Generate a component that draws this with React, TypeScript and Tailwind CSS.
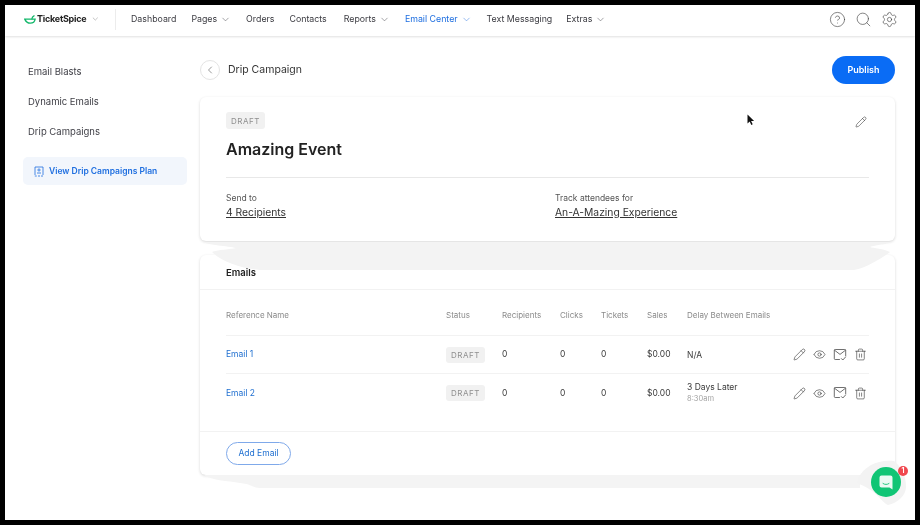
import { ChevronDown, ChevronLeft, CircleHelp, Search, Settings, Pencil, Eye, Trash2 } from "lucide-react";

function NavItem({ label, chevron, active, className }: { label: string; chevron?: boolean; active?: boolean; className?: string }) {
  return (
    <div className={`${active ? "text-[#1f6fe0]" : "text-[#3a3a40]"} flex items-center gap-[3px] ${className ?? ""}`}>
      <span>{label}</span>
      {chevron && <ChevronDown size={11} strokeWidth={1} />}
    </div>
  );
}

function MailCheck() {
  return (
    <svg width="14" height="14" viewBox="0 0 14 14" fill="none" stroke="#4a4a4a" strokeWidth="0.8" strokeLinecap="round" strokeLinejoin="round">
      <path d="M6.5 11.5H2.2a.9.9 0 0 1-.9-.9V2.4a.9.9 0 0 1 .9-.9h9.6a.9.9 0 0 1 .9.9V8" />
      <path d="M1.5 2.2 7 6.4l5.5-4.2" />
      <path d="M8.4 10.6l1.4 1.4 2.6-2.8" />
    </svg>
  );
}

function Actions() {
  return (
    <div className="flex items-center gap-[7px] text-[#333]">
      <Pencil size={13} strokeWidth={1.1} />
      <Eye size={13} strokeWidth={1.1} />
      <MailCheck />
      <Trash2 size={13} strokeWidth={1.1} />
    </div>
  );
}

const gridCols = "grid grid-cols-[220px_56px_58px_41px_46px_40px_106px_1fr] items-center";

function Row({ name, delay, sub }: { name: string; delay: string; sub?: string }) {
  return (
    <div className={`${gridCols} h-[38px] border-b border-[#f2f2f2] text-[8.5px] text-[#3a3a3a] last:border-b-0`}>
      <span className="text-[#1f6fd0]">{name}</span>
      <span className="justify-self-start rounded-[3px] bg-[#f1f1f1] px-[5px] py-[2px] text-[8px] tracking-[0.5px] text-[#8f8f8f]">DRAFT</span>
      <span>0</span>
      <span>0</span>
      <span>0</span>
      <span>$0.00</span>
      <div className="flex flex-col leading-[12px]">
        <span>{delay}</span>
        {sub && <span className="text-[7.5px] text-[#a3a3a3]">{sub}</span>}
      </div>
      <Actions />
    </div>
  );
}

export default function App() {
  return (
    <div className="h-[525px] w-[920px] overflow-hidden bg-black p-[5px] font-['Inter',sans-serif]">
      <div className="relative flex h-[515px] w-[910px] flex-col overflow-hidden bg-white blur-[0.3px]">
        <header className="relative z-10 flex h-[31px] shrink-0 items-center bg-white pb-[3px] pl-[19px] pr-[17px] text-[8.8px] shadow-[0_1px_2px_rgba(0,0,0,0.12)]">
          <div className="flex w-[76px] items-center gap-[1px]">
            <svg width="14" height="11" viewBox="0 0 13 10" fill="none" stroke="#12b76a" strokeWidth="1.4" strokeLinecap="round">
              <path d="M0.8 4.6h11.2c-.4 2.8-2.6 4.4-5.2 4.4C4 9 2 7.4 0.8 4.6Z" />
              <path d="M8.6 4.2c0-1.6.8-2.6 2.2-3.2" />
            </svg>
            <span className="text-[9px] font-bold tracking-[-0.25px] text-[#222]">TicketSpice</span>
            <ChevronDown size={10} strokeWidth={1} className="ml-[4px] text-[#555]" />
          </div>
          <div className="ml-[15px] mr-[15px] h-[21px] w-px bg-[#ececec]" />
          <nav className="flex items-center gap-[15px]">
            <NavItem label="Dashboard" />
            <NavItem label="Pages" chevron />
            <NavItem label="Orders" />
            <NavItem label="Contacts" className="mr-[2px]" />
            <NavItem label="Reports" chevron />
            <NavItem label="Email Center" chevron active />
            <NavItem label="Text Messaging" className="-mr-[1px]" />
            <NavItem label="Extras" chevron />
          </nav>
          <div className="ml-auto flex items-center gap-[9px] text-[#404040]">
            <CircleHelp size={17} strokeWidth={0.9} />
            <Search size={17} strokeWidth={0.9} />
            <Settings size={17} strokeWidth={0.9} />
          </div>
        </header>

        <div className="flex min-h-0 flex-1">
          <aside className="w-[195px] shrink-0 pl-[18px] pr-[12px] pt-[21px] text-[9.5px] text-[#3f3f46]">
            <div className="flex h-[30px] items-center pl-[5px]">Email Blasts</div>
            <div className="flex h-[30px] items-center pl-[5px]">Dynamic Emails</div>
            <div className="flex h-[30px] items-center pl-[5px]">Drip Campaigns</div>
            <div className="mt-[10px] flex h-[28px] w-[164px] items-center gap-[5px] rounded-[5px] bg-[#f2f6fc] pl-[11px] text-[8.5px] font-semibold text-[#1f6fe0]">
              <svg width="10" height="11" viewBox="0 0 10 11" fill="none" stroke="#1f6fe0" strokeWidth="0.8">
                <path d="M1 9V1h8v8" />
                <circle cx="5" cy="4" r="1.1" />
                <path d="M3 7h4M0.8 10h2M4 10h2M7 10h2" />
              </svg>
              <span>View Drip Campaigns Plan</span>
            </div>
          </aside>

          <main className="relative w-[695px] shrink-0">
            <div className="flex h-[61px] items-center pt-[6px]">
              <button className="flex h-[20px] w-[20px] items-center justify-center rounded-full border border-[#e4e4e4] text-[#444]">
                <ChevronLeft size={12} strokeWidth={1.1} />
              </button>
              <span className="ml-[8px] text-[10.5px] text-[#333]">Drip Campaign</span>
              <button className="ml-auto h-[28px] w-[63px] rounded-full bg-[#0a6cf5] text-[9px] font-semibold text-white">Publish</button>
            </div>

            <section className="h-[144px] rounded-[6px] bg-white px-[26px] pt-[15px] shadow-[0_1px_3px_rgba(0,0,0,0.16)]">
              <div className="flex items-start justify-between pr-[2px]">
                <span className="rounded-[3px] bg-[#f1f1f1] px-[5px] py-[2.5px] text-[8px] tracking-[0.5px] text-[#8f8f8f]">DRAFT</span>
                <Pencil size={12} strokeWidth={1.1} className="mt-[4px] text-[#333]" />
              </div>
              <h1 className="mt-[8px] text-[16px] font-semibold leading-[24px] text-[#222]">Amazing Event</h1>
              <div className="mt-[16px] border-t border-[#e8e8e8] pt-[14px]">
                <div className="flex text-[8.5px] text-[#555]">
                  <div className="w-[329px]">
                    <div className="leading-[12px]">Send to</div>
                    <div className="mt-[1px] text-[10.3px] leading-[14px] text-[#333] underline">4 Recipients</div>
                  </div>
                  <div>
                    <div className="leading-[12px]">Track attendees for</div>
                    <div className="mt-[1px] text-[10.3px] leading-[14px] text-[#333] underline">An-A-Mazing Experience</div>
                  </div>
                </div>
              </div>
            </section>

            <svg className="absolute left-0 top-[206px] z-10" width="695" height="28" viewBox="0 0 695 28">
              <path d="M3 0H692c-2 2-18 3-22 5 3 1 14 2 20 5-8 6-24 16-36 18H60C40 26 22 20 12 10c4-2 20-3 24-4C28 4 8 3 3 0Z" fill="#f3f3f3" />
            </svg>

            <section className="mt-[14px] h-[220px] rounded-[6px] bg-white pt-[15px] shadow-[0_1px_3px_rgba(0,0,0,0.16)]">
              <h2 className="relative z-20 h-[19px] pl-[26px] text-[9.5px] font-semibold leading-[6px] text-[#222]">Emails</h2>
              <div className="border-t border-[#f2f2f2] px-[26px]">
                <div className={`${gridCols} h-[46px] border-b border-[#f2f2f2] pt-[4px] text-[8px] text-[#8a8a8a]`}>
                  <span>Reference Name</span>
                  <span>Status</span>
                  <span>Recipients</span>
                  <span>Clicks</span>
                  <span>Tickets</span>
                  <span>Sales</span>
                  <span className="whitespace-nowrap">Delay Between Emails</span>
                  <span />
                </div>
                <Row name="Email 1" delay="N/A" />
                <Row name="Email 2" delay="3 Days Later" sub="8:30am" />
              </div>
              <div className="mt-[19px] flex h-[43px] items-center border-t border-[#f2f2f2] pl-[26px]">
                <button className="h-[23px] w-[65px] rounded-full border border-[#7fa9ea] text-[8.5px] text-[#1f6fd0]">Add Email</button>
              </div>
            </section>
            <svg className="block" width="695" height="13" viewBox="0 0 695 13">
              <path d="M4 0H660v13H60C50 12 52 9 40 8 28 6 10 5 4 0Z" fill="#f4f4f4" />
            </svg>
          </main>
        </div>

        <svg className="absolute left-[742px] top-[109px]" width="8" height="12" viewBox="0 0 8 12">
          <path d="M0.5 0.5v9l2.2-2 1.6 3.4 1.4-.7-1.6-3.2h3Z" fill="#111" />
        </svg>

        <svg className="absolute left-[845px] top-[446px]" width="60" height="60" viewBox="0 0 60 60">
          <path d="M8 28C14 14 30 8 44 10c8 6 12 16 12 26 0 8-8 16-18 18C30 50 26 38 6 32Z" fill="#f3f3f3" />
        </svg>
        <div className="absolute left-[866px] top-[462px] flex h-[30px] w-[30px] items-center justify-center rounded-full bg-[#10c575]">
          <svg width="14" height="15" viewBox="0 0 14 15">
            <path d="M2.5 0.5h9a2 2 0 0 1 2 2v12l-3-2h-8a2 2 0 0 1-2-2v-8a2 2 0 0 1 2-2Z" fill="#eafaf3" />
            <path d="M4 8.5c1.8 1.3 4.2 1.3 6 0" fill="none" stroke="#10c575" strokeWidth="0.9" strokeLinecap="round" />
          </svg>
        </div>
        <div className="absolute left-[893px] top-[461px] flex h-[10px] w-[10px] items-center justify-center rounded-full bg-[#f0484f] text-[7px] font-bold text-white">1</div>
      </div>
    </div>
  );
}
